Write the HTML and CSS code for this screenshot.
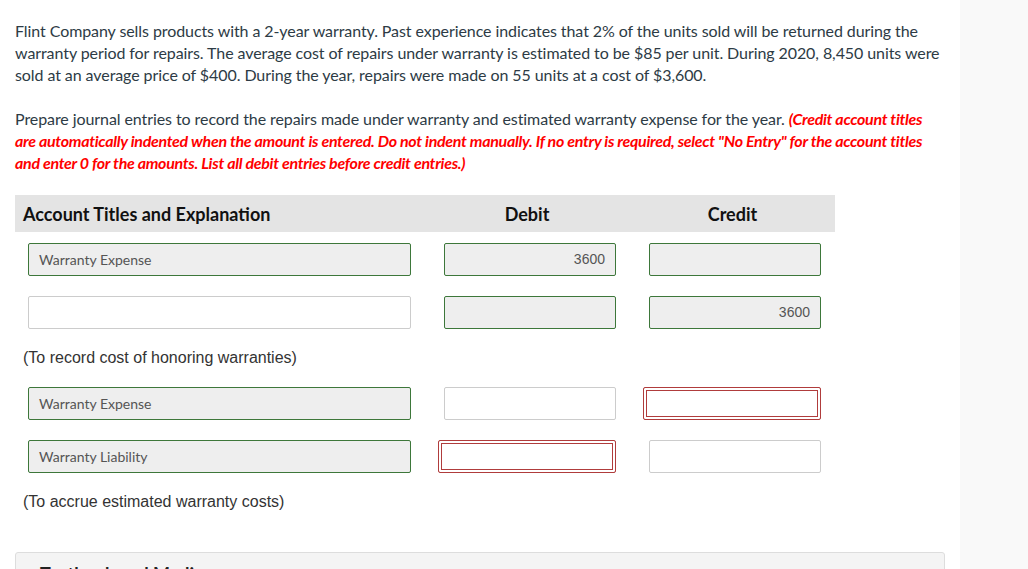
FILE: index.html
```html
<!DOCTYPE html>
<html>
<head>
<meta charset="utf-8">
<link rel="stylesheet" href="styles.css">
</head>
<body>
<div class="page">
  <main class="content">
    <p class="para first">Flint Company sells products with a 2-year warranty. Past experience indicates that 2% of the units sold will be returned during the warranty period for repairs. The average cost of repairs under warranty is estimated to be $85 per unit. During 2020, 8,450 units were sold at an average price of $400. During the year, repairs were made on 55 units at a cost of $3,600.</p>
    <p class="para last">Prepare journal entries to record the repairs made under warranty and estimated warranty expense for the year. <em class="note">(Credit account titles are automatically indented when the amount is entered. Do not indent manually. If no entry is required, select "No Entry" for the account titles and enter 0 for the amounts. List all debit entries before credit entries.)</em></p>

    <div class="journal">
      <div class="jhead">
        <div class="hcell hacct">Account Titles and Explanation</div>
        <div class="hcell hdebit">Debit</div>
        <div class="hcell hcredit">Credit</div>
      </div>

      <div class="jrow">
        <div class="cell acct"><div class="field ok">Warranty Expense</div></div>
        <div class="cell amt"><div class="field ok num">3600</div></div>
        <div class="cell amt"><div class="field ok num"></div></div>
      </div>
      <div class="jrow">
        <div class="cell acct"><div class="field blank"></div></div>
        <div class="cell amt"><div class="field ok num"></div></div>
        <div class="cell amt"><div class="field ok num">3600</div></div>
      </div>
      <div class="explain">(To record cost of honoring warranties)</div>

      <div class="jrow">
        <div class="cell acct"><div class="field ok">Warranty Expense</div></div>
        <div class="cell amt"><div class="field blank num"></div></div>
        <div class="cell amt"><div class="field bad num"></div></div>
      </div>
      <div class="jrow">
        <div class="cell acct"><div class="field ok">Warranty Liability</div></div>
        <div class="cell amt"><div class="field bad num"></div></div>
        <div class="cell amt"><div class="field blank num"></div></div>
      </div>
      <div class="explain">(To accrue estimated warranty costs)</div>
    </div>

    <section class="media">
      <h3 class="media-title">Textbook and Media</h3>
    </section>
  </main>
  <aside class="sidebar"></aside>
</div>
</body>
</html>
```
FILE: styles.css
```css
html, body {
  margin: 0;
  padding: 0;
  background: #fff;
}
.page {
  display: flex;
  width: 1028px;
  height: 569px;
  overflow: hidden;
}
.content {
  width: 930px;
  padding: 0 15px;
  flex: none;
}
.sidebar {
  flex: 1;
  background: #f9f9f9;
}
.para {
  font-family: Lato, "Liberation Sans", sans-serif;
  font-size: 16px;
  line-height: 22px;
  color: #2d3b45;
  margin: 0 0 22px 0;
  letter-spacing: -0.08px;
}
.para.first {
  margin-top: 20px;
}
.para.last {
  margin-bottom: 0;
}
.note {
  color: #f00;
  font-weight: bold;
  font-style: italic;
  letter-spacing: -0.3px;
}
.journal {
  width: 820px;
  margin-top: 21px;
}
.jhead {
  display: grid;
  grid-template-columns: 415px 200px 205px;
  height: 37px;
  align-items: center;
  background: #e4e4e4;
  font-family: Lato, "Liberation Sans", sans-serif;
  font-weight: bold;
  font-size: 18px;
  color: #111;
}
.hacct {
  padding-left: 8px;
}
.hdebit {
  text-align: center;
  padding-right: 6px;
}
.hcredit {
  text-align: center;
}
.jrow {
  display: grid;
  grid-template-columns: 415px 200px 205px;
  margin-top: 20px;
}
.jhead + .jrow {
  margin-top: 11px;
}
.explain + .jrow {
  margin-top: 18px;
}
.cell {
  display: flex;
}
.acct {
  padding-left: 13px;
  padding-right: 19px;
}
.amt {
  justify-content: flex-end;
  padding-right: 14px;
}
.field {
  box-sizing: border-box;
  height: 33px;
  border-radius: 2px;
  font-family: Lato, "Liberation Sans", sans-serif;
  font-size: 14px;
  line-height: 31px;
  color: #555;
  padding: 0 10px;
  width: 100%;
}
.amt .field {
  width: 172px;
}
.field.num {
  text-align: right;
  font-family: "Liberation Sans", Arial, sans-serif;
  font-size: 14px;
}
.field.ok {
  background: #eeeeee;
  border: 1px solid #3d773a;
}
.field.blank {
  background: #fff;
  border: 1px solid #cccccc;
}
.amt .field.bad {
  width: 178px;
  background: #fff;
  border: 1px solid #b03c3c;
  box-shadow: inset 0 0 0 2px #fff, inset 0 0 0 3px #b03c3c;
}
.explain {
  font-family: "Liberation Sans", Arial, sans-serif;
  font-size: 16px;
  line-height: 22px;
  color: #333;
  padding-left: 8px;
  margin-top: 18px;
}
.media {
  margin-top: 39px;
  border: 1px solid #dddddd;
  border-radius: 3px;
  background: #f4f4f4;
  padding: 10px 24px;
}
.media-title {
  margin: 0;
  font-family: Lato, "Liberation Sans", sans-serif;
  font-size: 18px;
  line-height: 22px;
  font-weight: bold;
  color: #222;
}
```
